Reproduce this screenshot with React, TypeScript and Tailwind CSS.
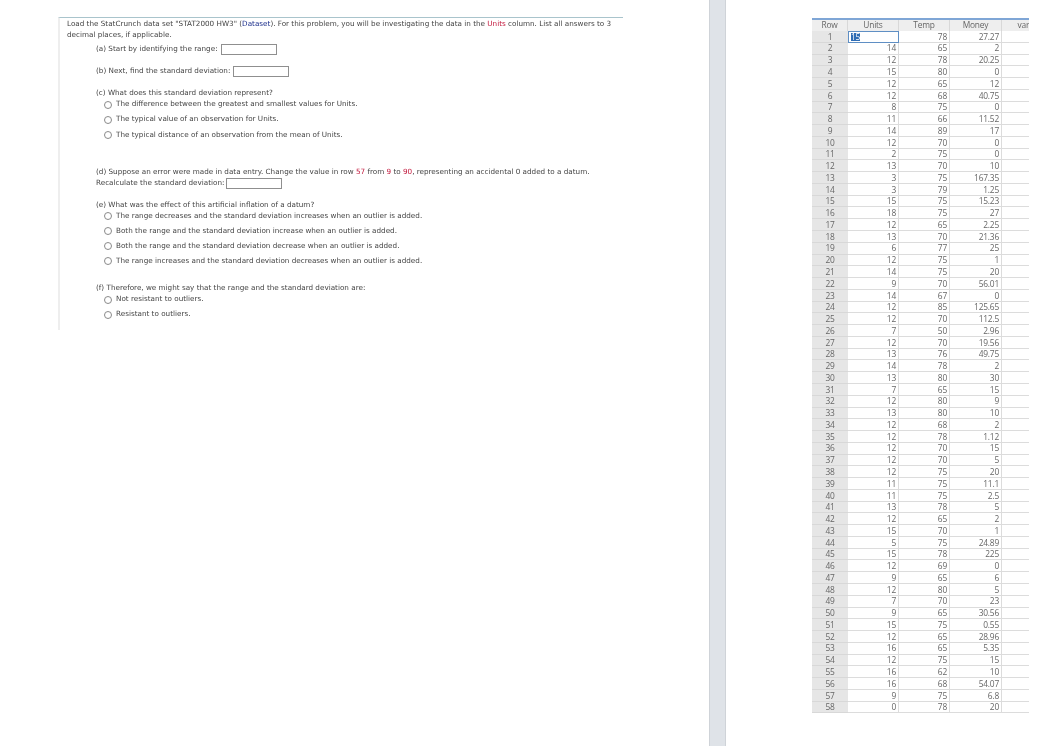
const units = [15,14,12,15,12,12,8,11,14,12,2,13,3,3,15,18,12,13,6,12,14,9,14,12,12,7,12,13,14,13,7,12,13,12,12,12,12,12,11,11,13,12,15,5,15,12,9,12,7,9,15,12,16,12,16,16,9,0];
const temp = [78,65,78,80,65,68,75,66,89,70,75,70,75,79,75,75,65,70,77,75,75,70,67,85,70,50,70,76,78,80,65,80,80,68,78,70,70,75,75,75,78,65,70,75,78,69,65,80,70,65,75,65,65,75,62,68,75,78];
const money = ["27.27","2","20.25","0","12","40.75","0","11.52","17","0","0","10","167.35","1.25","15.23","27","2.25","21.36","25","1","20","56.01","0","125.65","112.5","2.96","19.56","49.75","2","30","15","9","10","2","1.12","15","5","20","11.1","2.5","5","2","1","24.89","225","0","6","5","23","30.56","0.55","28.96","5.35","15","10","54.07","6.8","20"];

function Box({ ml }: { ml: string }) {
  return <span className={`inline-block w-[56px] h-[11px] border border-[#8f8f8f] bg-white align-middle ${ml}`} />;
}

function Option({ text, mt }: { text: string; mt: string }) {
  return (
    <div className={`flex items-center h-[11px] pl-[44px] ${mt}`}>
      <span className="w-[8px] h-[8px] rounded-full border border-[#8a8a8a] bg-white shrink-0" />
      <span className="ml-[4px] whitespace-nowrap">{text}</span>
    </div>
  );
}

function Line({ children, mt, indent = true }: { children: React.ReactNode; mt: string; indent?: boolean }) {
  return <div className={`h-[11px] leading-[11px] whitespace-nowrap ${indent ? "pl-[36px]" : "pl-[7px]"} ${mt}`}>{children}</div>;
}

const cell = "shrink-0 flex items-center justify-end pr-[2px] pt-[1px] border-r border-b border-[#dcdcdc]";

export default function App() {
  return (
    <div className="w-[1059px] h-[746px] flex bg-white overflow-hidden blur-[0.3px]">
      <div className="w-[709px] shrink-0 pt-[17px] pl-[58px]">
        <div className="w-[565px] h-[313px] border-t border-t-[#a9c4cc] border-l-2 border-l-[#eeeeee] font-['DejaVu_Sans',sans-serif] text-[7.23px] text-[#444444]">
          <Line mt="mt-[-0.5px]" indent={false}>
            Load the StatCrunch data set "STAT2000 HW3" (<span className="text-[#1c2f8c]">Dataset</span>). For this problem, you will be investigating the data in the <span className="text-[#c2183c]">Units</span> column. List all answers to 3
          </Line>
          <Line mt="mt-[0.5px]" indent={false}>decimal places, if applicable.</Line>
          <Line mt="mt-[3px]">(a) Start by identifying the range:<Box ml="ml-[3px]" /></Line>
          <Line mt="mt-[11px]">(b) Next, find the standard deviation:<Box ml="ml-[3px]" /></Line>
          <Line mt="mt-[11px]">(c) What does this standard deviation represent?</Line>
          <Option mt="mt-[1px]" text="The difference between the greatest and smallest values for Units." />
          <Option mt="mt-[4px]" text="The typical value of an observation for Units." />
          <Option mt="mt-[4.5px]" text="The typical distance of an observation from the mean of Units." />
          <Line mt="mt-[25px]">
            (d) Suppose an error were made in data entry. Change the value in row <span className="text-[#c2183c]">57</span> from <span className="text-[#c2183c]">9</span> to <span className="text-[#c2183c]">90</span>, representing an accidental 0 added to a datum.
          </Line>
          <Line mt="mt-[0.5px]">Recalculate the standard deviation:<Box ml="ml-[1px]" /></Line>
          <Line mt="mt-[10.5px]">(e) What was the effect of this artificial inflation of a datum?</Line>
          <Option mt="mt-[1px]" text="The range decreases and the standard deviation increases when an outlier is added." />
          <Option mt="mt-[4px]" text="Both the range and the standard deviation increase when an outlier is added." />
          <Option mt="mt-[4px]" text="Both the range and the standard deviation decrease when an outlier is added." />
          <Option mt="mt-[4px]" text="The range increases and the standard deviation decreases when an outlier is added." />
          <Line mt="mt-[15.5px]">(f) Therefore, we might say that the range and the standard deviation are:</Line>
          <Option mt="mt-[1px]" text="Not resistant to outliers." />
          <Option mt="mt-[4px]" text="Resistant to outliers." />
        </div>
      </div>
      <div className="w-[17px] shrink-0 bg-[#dfe3e8] border-x border-[#cfd3d8]" />
      <div className="flex-1 pt-[18px] pl-[86px]">
        <div className="w-[217px] overflow-hidden border-t-2 border-t-[#7fa6d6] font-['Open_Sans',sans-serif] text-[8.4px] tracking-[-0.2px] text-[#666666]">
          <div className="flex h-[11px] bg-[#eeeeee] leading-none">
            <div className="w-[36px] shrink-0 flex items-center justify-center border-r border-[#d8d8d8]">Row</div>
            <div className="w-[51px] shrink-0 flex items-center justify-center border-r border-[#d8d8d8]">Units</div>
            <div className="w-[51px] shrink-0 flex items-center justify-center border-r border-[#d8d8d8]">Temp</div>
            <div className="w-[52px] shrink-0 flex items-center justify-center border-r border-[#d8d8d8]">Money</div>
            <div className="w-[27px] shrink-0 flex items-center pl-[15.5px] whitespace-nowrap">var</div>
          </div>
          {units.map((u, i) => (
            <div key={i} className="flex h-[11.78px] leading-none">
              <div className="w-[36px] shrink-0 flex items-center justify-center pt-[1px] bg-[#e6e6e6] border-b border-[#d8d8d8]">{i + 1}</div>
              {i === 0 ? (
                <div className="w-[51px] shrink-0 flex items-center border-[1.5px] border-[#5f8fc4] pl-[2px]">
                  <span className="bg-[#2f6db5] text-white">15</span>
                </div>
              ) : (
                <div className={`w-[51px] ${cell}`}>{u}</div>
              )}
              <div className={`w-[51px] ${cell}`}>{temp[i]}</div>
              <div className={`w-[52px] ${cell}`}>{money[i]}</div>
              <div className="w-[27px] shrink-0 border-b border-[#dcdcdc]" />
            </div>
          ))}
        </div>
      </div>
    </div>
  );
}
